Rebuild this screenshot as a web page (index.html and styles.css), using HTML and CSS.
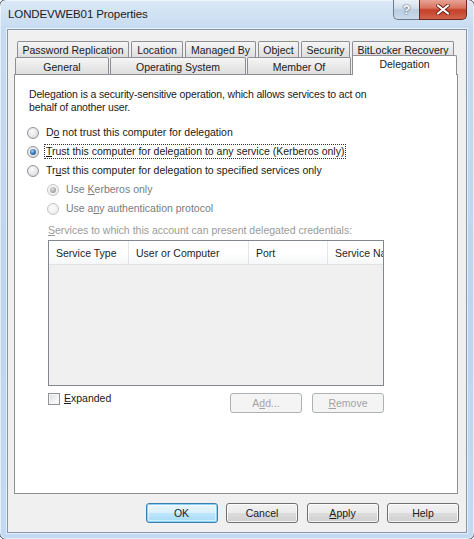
FILE: index.html
```html
<!DOCTYPE html>
<html>
<head>
<meta charset="utf-8">
<link rel="stylesheet" href="styles.css">
</head>
<body>
<div class="frame">
  <div class="titlebar">
    <span class="title">LONDEVWEB01 Properties</span>
    <div class="caption-btns">
      <div class="cbtn help">?</div>
      <div class="cbtn close">
        <svg width="14" height="11" viewBox="0 0 14 11"><path d="M2 1.5 L12 9.5 M12 1.5 L2 9.5" stroke="#5a1a10" stroke-width="3.6" stroke-linecap="round"/><path d="M2 1.5 L12 9.5 M12 1.5 L2 9.5" stroke="#ffffff" stroke-width="2.2" stroke-linecap="round"/></svg>
      </div>
    </div>
  </div>
  <div class="client">
    <div class="tabs">
      <div class="tabrow row1">
        <div class="tab w-pr">Password Replication</div>
        <div class="tab w-loc">Location</div>
        <div class="tab w-mb">Managed By</div>
        <div class="tab w-obj">Object</div>
        <div class="tab w-sec">Security</div>
        <div class="tab w-bl">BitLocker Recovery</div>
      </div>
      <div class="tabrow row2">
        <div class="tab w-gen">General</div>
        <div class="tab w-os">Operating System</div>
        <div class="tab w-mo">Member Of</div>
        <div class="tab tab-sel w-del">Delegation</div>
      </div>
    </div>
    <div class="panel">
      <p class="desc">Delegation is a security-sensitive operation, which allows services to act on<br>behalf of another user.</p>
      <div class="options">
        <div class="opt"><span class="radio"></span><span class="lbl">D<u>o</u> not trust this computer for delegation</span></div>
        <div class="opt"><span class="radio checked"></span><span class="lbl focus"><u>T</u>rust this computer for delegation to any service (Kerberos only)</span></div>
        <div class="opt"><span class="radio"></span><span class="lbl">Tr<u>u</u>st this computer for delegation to specified services only</span></div>
        <div class="opt sub disabled"><span class="radio checked"></span><span class="lbl">Use <u>K</u>erberos only</span></div>
        <div class="opt sub disabled"><span class="radio"></span><span class="lbl">Use a<u>n</u>y authentication protocol</span></div>
      </div>
      <div class="services-label"><u>S</u>ervices to which this account can present delegated credentials:</div>
      <div class="listview">
        <div class="lv-header">
          <div class="col c1">Service Type</div>
          <div class="col c2">User or Computer</div>
          <div class="col c3">Port</div>
          <div class="col c4">Service Na</div>
        </div>
        <div class="lv-body"></div>
      </div>
      <div class="list-actions">
        <div class="check-row"><span class="checkbox"></span><span class="lbl"><u>E</u>xpanded</span></div>
        <div class="btn disabled-btn">A<u>d</u>d...</div>
        <div class="btn disabled-btn"><u>R</u>emove</div>
      </div>
    </div>
    <div class="buttons">
      <div class="btn default-btn">OK</div>
      <div class="btn">Cancel</div>
      <div class="btn"><u>A</u>pply</div>
      <div class="btn">Help</div>
    </div>
  </div>
</div>
</body>
</html>
```

FILE: styles.css
```css
* { box-sizing: border-box; }
html, body { margin: 0; padding: 0; }
body {
  width: 474px;
  height: 539px;
  overflow: hidden;
  background: #ffffff;
  font-family: "Liberation Sans", Arial, sans-serif;
  font-size: 10.5px;
  color: #1a1a1a;
}
u { text-decoration: underline; text-underline-offset: 1px; }

.frame {
  margin: -1px;
  width: 476px;
  height: 541px;
  border: 1px solid #3d4a5a;
  border-radius: 7px;
  background: linear-gradient(180deg, #dbe8f6 0px, #c6dbf1 30px, #bdd5ee 300px, #c3daf2 541px);
  display: flex;
  flex-direction: column;
  box-shadow: inset 0 0 0 1px rgba(255,255,255,0.55);
}

.titlebar {
  height: 29px;
  flex: none;
  display: flex;
  justify-content: space-between;
  align-items: flex-start;
  padding-left: 8px;
}
.title {
  font-size: 11.5px;
  color: #1b1b1b;
  margin-top: 8px;
  letter-spacing: -0.1px;
}
.caption-btns {
  display: flex;
  margin-right: 7px;
  margin-top: -1px;
}
.cbtn {
  height: 21px;
  display: flex;
  align-items: center;
  justify-content: center;
}
.help {
  width: 26px;
  border: 1px solid #6b7a8c;
  border-top: none;
  border-right: none;
  border-radius: 0 0 0 5px;
  background: linear-gradient(180deg, #eef3f9 0%, #d3dfec 45%, #bccde1 55%, #cbdaea 100%);
  color: #ffffff;
  font-weight: bold;
  font-size: 13px;
  text-shadow: 0 0 2px #4b5b6e, 0 0 1px #4b5b6e;
}
.close {
  width: 48px;
  border: 1px solid #6e2a20;
  border-top: none;
  border-radius: 0 0 5px 0;
  background: linear-gradient(180deg, #e9a99b 0%, #d9735f 45%, #c4402a 55%, #d0634a 100%);
}

.client {
  flex: 1;
  margin: 0 7px 6px 7px;
  border: 1px solid #8496ad;
  background: #f0f0f0;
  display: flex;
  flex-direction: column;
  padding: 11px 7px 0 6px;
  box-shadow: 0 0 0 1px rgba(255,255,255,0.6);
}

.tabs { display: flex; flex-direction: column; }
.tabrow { display: flex; align-items: flex-end; }
.row1 { padding-left: 3px; gap: 2px; height: 16px; }
.row2 { padding-left: 1px; gap: 1px; height: 17px; position: relative; z-index: 2; }
.tab {
  height: 16px;
  border: 1px solid #8c8e94;
  border-bottom: none;
  border-radius: 2px 2px 0 0;
  background: linear-gradient(180deg, #f6f6f6 0%, #e9e9e9 50%, #dedede 100%);
  display: flex;
  align-items: center;
  justify-content: center;
  font-size: 10.5px;
  color: #1a1a1a;
  white-space: nowrap;
  padding-top: 1px;
}
.row2 .tab { height: 17px; }
.tab-sel {
  height: 20px !important;
  margin-bottom: -1px;
  background: #ffffff;
  align-items: flex-start;
  padding-top: 2px;
}
.w-pr { width: 112px; }
.w-loc { width: 52px; }
.w-mb { width: 71px; }
.w-obj { width: 41px; }
.w-sec { width: 49px; }
.w-bl { width: 102px; }
.w-gen { width: 94px; }
.w-os { width: 136px; }
.w-mo { width: 104px; }
.w-del { width: 105px; }

.panel {
  height: 420px;
  width: 444px;
  background: #ffffff;
  border: 1px solid #8c8e94;
  padding: 13px 10px 0 14px;
  display: flex;
  flex-direction: column;
}
.desc {
  margin: 0;
  line-height: 12.5px;
  white-space: nowrap;
  letter-spacing: -0.15px;
}
.options {
  margin-top: 10px;
  display: flex;
  flex-direction: column;
}
.opt {
  height: 19px;
  display: flex;
  align-items: center;
  gap: 6px;
  margin-left: -2px;
}
.opt.sub { margin-left: 18px; }
.lbl { white-space: nowrap; padding: 0 1px; line-height: 13px; }
.lbl.focus { outline: 1px dotted #333; outline-offset: 0px; }
.disabled .lbl { color: #7c7c7c; }

.radio {
  width: 12px;
  height: 12px;
  border-radius: 50%;
  border: 1px solid #8f9398;
  background: radial-gradient(circle at 40% 35%, #fafafa 0%, #e8e8e8 50%, #cfcfcf 100%);
  display: flex;
  align-items: center;
  justify-content: center;
  flex: none;
}
.radio.checked::after {
  content: "";
  width: 6px;
  height: 6px;
  border-radius: 50%;
  background: radial-gradient(circle at 40% 35%, #a9d3f5 0%, #3d7fc2 45%, #123f73 100%);
}
.disabled .radio {
  border-color: #c2c4c7;
  background: radial-gradient(circle at 40% 35%, #fbfbfb 0%, #f1f1f1 60%, #e4e4e4 100%);
}
.disabled .radio.checked::after {
  background: radial-gradient(circle at 40% 35%, #e0e0e0 0%, #a8a8a8 60%, #8e8e8e 100%);
}

.services-label {
  margin-top: 6px;
  margin-left: 19px;
  color: #9a9a9a;
  white-space: nowrap;
}
.listview {
  margin-top: 4px;
  margin-left: 19px;
  width: 336px;
  height: 146px;
  border: 1px solid #828790;
  background: #f0f0f0;
  display: flex;
  flex-direction: column;
}
.lv-header {
  height: 24px;
  display: flex;
  background: linear-gradient(180deg, #ffffff 0%, #ffffff 50%, #f6f7f8 100%);
  border-bottom: 1px solid #e1e3e6;
  overflow: hidden;
}
.col {
  display: flex;
  align-items: center;
  padding-left: 7px;
  border-right: 1px solid #e3e5e8;
  white-space: nowrap;
  color: #1e1e1e;
  flex: none;
}
.c1 { width: 80px; }
.c2 { width: 120px; }
.c3 { width: 79px; }
.c4 { width: 55px; border-right: none; overflow: hidden; }
.lv-body { flex: 1; }

.list-actions {
  margin-top: 7px;
  margin-left: 19px;
  width: 336px;
  display: flex;
  align-items: flex-start;
  gap: 10px;
}
.check-row {
  display: flex;
  align-items: center;
  gap: 3px;
  flex: 1;
  margin-top: -1px;
}
.checkbox {
  width: 12px;
  height: 12px;
  border: 1px solid #8f9398;
  background: linear-gradient(135deg, #dcdcdc 0%, #f4f4f4 60%, #ffffff 100%);
  box-shadow: inset 0 0 0 1px #f6f6f6;
  flex: none;
}

.btn {
  width: 72px;
  height: 20px;
  border: 1px solid #707070;
  border-radius: 3px;
  background: linear-gradient(180deg, #f2f2f2 0%, #ebebeb 50%, #dddddd 50%, #cfcfcf 100%);
  box-shadow: inset 0 0 0 1px rgba(255,255,255,0.8);
  display: flex;
  align-items: center;
  justify-content: center;
  color: #1a1a1a;
  flex: none;
}
.disabled-btn {
  border-color: #adb2b5;
  background: #f4f4f4;
  box-shadow: none;
  color: #a3a3a3;
}
.default-btn {
  border-color: #3c7fb1;
  background: linear-gradient(180deg, #eaf6fd 0%, #d9f0fc 50%, #bee6fd 50%, #a7d9f5 100%);
  box-shadow: inset 0 0 0 1px #8ad1f5, inset 0 0 0 2px rgba(255,255,255,0.5);
}

.buttons {
  display: flex;
  justify-content: flex-end;
  gap: 8.5px;
  margin-top: 9px;
}
```
